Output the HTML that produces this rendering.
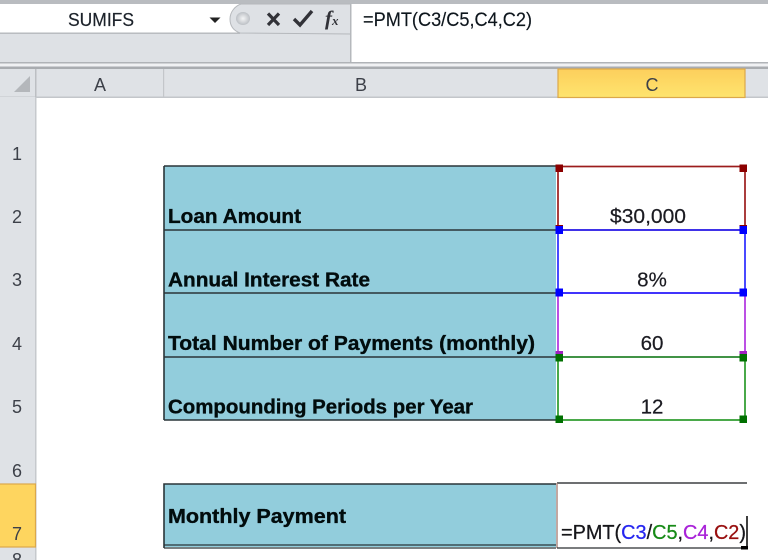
<!DOCTYPE html>
<html>
<head>
<meta charset="utf-8">
<title>PMT</title>
<style>
html,body{margin:0;padding:0;background:#fff;width:768px;height:560px;overflow:hidden}
svg{display:block}
text{font-family:"Liberation Sans",sans-serif}
.h{font-size:18px;fill:#3c4148}
.b{font-size:20px;font-weight:bold;fill:#05080c;stroke:#05080c;stroke-width:.35px}
.n{font-size:20.500px;fill:#1a1a20;stroke:#1a1a20;stroke-width:.2px}
.f{font-size:19.500px;fill:#10161f;stroke:#10161f;stroke-width:.15px}
.c{stroke-width:.25px}
</style>
</head>
<body>
<svg width="768" height="560" viewBox="0 0 768 560" xmlns="http://www.w3.org/2000/svg">
<defs>
<filter id="s" x="-5%" y="-5%" width="110%" height="110%"><feGaussianBlur stdDeviation="0.35"/></filter>
<linearGradient id="y" x1="0" y1="0" x2="0" y2="1"><stop offset="0" stop-color="#fdcf5c"/><stop offset="1" stop-color="#fee46e"/></linearGradient>
<radialGradient id="ball"><stop offset="0" stop-color="#f4f5f6"/><stop offset="1" stop-color="#bcc0c5"/></radialGradient>
</defs>
<g filter="url(#s)">
<rect width="768" height="560" fill="#fff"/>
<!-- top bar -->
<rect x="0" y="0" width="768" height="4" fill="#b9bcc0"/>
<rect x="0" y="33" width="351" height="29" fill="#dee1e5"/>
<rect x="0" y="32.500" width="240" height="1.400" fill="#b5b8bc"/>
<path d="M240 33 C232 30 230 24 230 19 C230 12 235 6 241 4 L351 4 L351 34 Z" fill="#dee1e5" stroke="#b5b8bc" stroke-width="1"/>
<rect x="350" y="4" width="1.500" height="58" fill="#b5b8bc"/>
<ellipse cx="243" cy="18.500" rx="7" ry="6.500" fill="url(#ball)"/>
<text x="68" y="26" textLength="66" lengthAdjust="spacingAndGlyphs" style="font-size:18.500px;fill:#1c222a;stroke:#1c222a;stroke-width:.2px">SUMIFS</text>
<path d="M209.500 17.500 L220.500 17.500 L215 23 Z" fill="#222"/>
<path d="M268 13.500 L279 25 M279 13.500 L268 25" stroke="#303338" stroke-width="3.200" fill="none"/>
<path d="M294 19 L300 25 L312 11" stroke="#303338" stroke-width="3.400" fill="none"/>
<text x="325" y="25" style="font-family:'Liberation Serif',serif;font-size:21px;font-style:italic;font-weight:bold;fill:#303338">f</text>
<text x="332" y="25" style="font-family:'Liberation Serif',serif;font-size:13px;font-style:italic;font-weight:bold;fill:#303338">x</text>
<text class="f" x="363" y="26" textLength="169" lengthAdjust="spacingAndGlyphs">=PMT(C3/C5,C4,C2)</text>
<!-- separator -->
<rect x="0" y="62" width="768" height="1.500" fill="#b0b3b7"/>
<rect x="0" y="63.500" width="768" height="3" fill="#f0f1f3"/>
<rect x="0" y="66.500" width="768" height="2.500" fill="#a9acb0"/>
<!-- column header -->
<rect x="0" y="69" width="768" height="28" fill="#dfe2e6"/>
<rect x="0" y="96.500" width="768" height="1.500" fill="#c3c6ca"/>
<rect x="35" y="69" width="1.500" height="28" fill="#bcbfc3"/>
<rect x="163" y="69" width="1.200" height="28" fill="#c3c6ca"/>
<path d="M14 92 L30 92 L30 76 Z" fill="#b4b7bb"/>
<rect x="558" y="69" width="187" height="28.500" fill="url(#y)" stroke="#dca84a" stroke-width="1.200"/>
<text class="h" x="100" y="91" text-anchor="middle">A</text>
<text class="h" x="361" y="91" text-anchor="middle">B</text>
<text class="h" x="652" y="91" text-anchor="middle">C</text>
<!-- row headers -->
<rect x="0" y="97" width="36" height="463" fill="#dfe2e6"/>
<rect x="35" y="97" width="1.500" height="463" fill="#c6c9cd"/>
<rect x="-1" y="484" width="36.500" height="63" fill="#fed55f" stroke="#dca84a" stroke-width="1.200"/>
<text class="h" x="17" y="160" text-anchor="middle">1</text>
<text class="h" x="17" y="223" text-anchor="middle">2</text>
<text class="h" x="17" y="286" text-anchor="middle">3</text>
<text class="h" x="17" y="350" text-anchor="middle">4</text>
<text class="h" x="17" y="413" text-anchor="middle">5</text>
<text class="h" x="17" y="477" text-anchor="middle">6</text>
<text class="h" x="17" y="540" text-anchor="middle">7</text>
<text class="h" x="17" y="566" text-anchor="middle">8</text>
<!-- blue table -->
<rect x="163.500" y="166" width="392.500" height="254" fill="#92cddc"/>
<path d="M164 166 H558 M164 230 H558 M164 293 H558 M164 357 H558 M164 420 H558 M164 166 V420" stroke="#2a3539" stroke-width="1.600" fill="none"/>
<text class="b" x="168" y="223" textLength="133" lengthAdjust="spacingAndGlyphs">Loan Amount</text>
<text class="b" x="168" y="286.500" textLength="202" lengthAdjust="spacingAndGlyphs">Annual Interest Rate</text>
<text class="b" x="168" y="350" textLength="367" lengthAdjust="spacingAndGlyphs">Total Number of Payments (monthly)</text>
<text class="b" x="168" y="413.500" textLength="305" lengthAdjust="spacingAndGlyphs">Compounding Periods per Year</text>
<!-- monthly -->
<rect x="163.500" y="484" width="392.500" height="63" fill="#92cddc"/>
<path d="M164 548 V484 H556" stroke="#2a3539" stroke-width="1.600" fill="none"/>
<path d="M164 545 H556 M164 548 H556" stroke="#2a3539" stroke-width="1.300" fill="none"/>
<text class="b" x="168" y="523" textLength="178" lengthAdjust="spacingAndGlyphs">Monthly Payment</text>
<!-- coloured ranges -->
<g fill="none" stroke-width="1.700">
<rect x="558" y="166.500" width="187" height="63.500" stroke="#9c1f1f"/>
<rect x="558" y="293" width="187" height="64" stroke="#b030e0"/>
<rect x="558" y="357" width="187" height="63" stroke="#2a9a2a"/>
<rect x="558" y="230" width="187" height="63" stroke="#2a2aff"/>
</g>
<g fill="#8b0000">
<rect x="555.500" y="164.500" width="7.500" height="7.500"/><rect x="739.500" y="164.500" width="7.500" height="7.500"/>
<rect x="555.500" y="225" width="7.500" height="5"/><rect x="739.500" y="225" width="7.500" height="5"/>
</g>
<g fill="#a020c0">
<rect x="555.500" y="351" width="7.500" height="5"/><rect x="739.500" y="351" width="7.500" height="5"/>
</g>
<g fill="#0000ff">
<rect x="555.500" y="226" width="7.500" height="8"/><rect x="739.500" y="226" width="7.500" height="8"/>
<rect x="555.500" y="288.500" width="7.500" height="8"/><rect x="739.500" y="288.500" width="7.500" height="8"/>
</g>
<g fill="#007000">
<rect x="555.500" y="354" width="7.500" height="7.500"/><rect x="739.500" y="354" width="7.500" height="7.500"/>
<rect x="555.500" y="415.500" width="7.500" height="7.500"/><rect x="739.500" y="415.500" width="7.500" height="7.500"/>
</g>
<text class="n" x="648" y="223" text-anchor="middle" textLength="76" lengthAdjust="spacingAndGlyphs">$30,000</text>
<text class="n" x="652" y="286.500" text-anchor="middle">8%</text>
<text class="n" x="652" y="350" text-anchor="middle">60</text>
<text class="n" x="652" y="413.500" text-anchor="middle">12</text>
<!-- active cell -->
<path d="M557 483 H747" stroke="#3c3f43" stroke-width="1.600" fill="none"/>
<path d="M557 483 V548" stroke="#a07a70" stroke-width="1.300" fill="none"/>
<path d="M557 548 H742" stroke="#2a2d30" stroke-width="1.300" fill="none"/>
<path d="M747 516 V548" stroke="#111" stroke-width="1.600" fill="none"/>
<rect x="741" y="546" width="7" height="3.500" fill="#000"/>
<text x="561" y="539" style="font-size:20px" textLength="185" lengthAdjust="spacingAndGlyphs"><tspan class="c" fill="#15151a" stroke="#15151a">=PMT(</tspan><tspan class="c" fill="#2525f0" stroke="#2525f0">C3</tspan><tspan class="c" fill="#15151a" stroke="#15151a">/</tspan><tspan class="c" fill="#158a15" stroke="#158a15">C5</tspan><tspan class="c" fill="#15151a" stroke="#15151a">,</tspan><tspan class="c" fill="#a820d8" stroke="#a820d8">C4</tspan><tspan class="c" fill="#15151a" stroke="#15151a">,</tspan><tspan class="c" fill="#981010" stroke="#981010">C2</tspan><tspan class="c" fill="#15151a" stroke="#15151a">)</tspan></text>
</g>
</svg>
</body>
</html>
